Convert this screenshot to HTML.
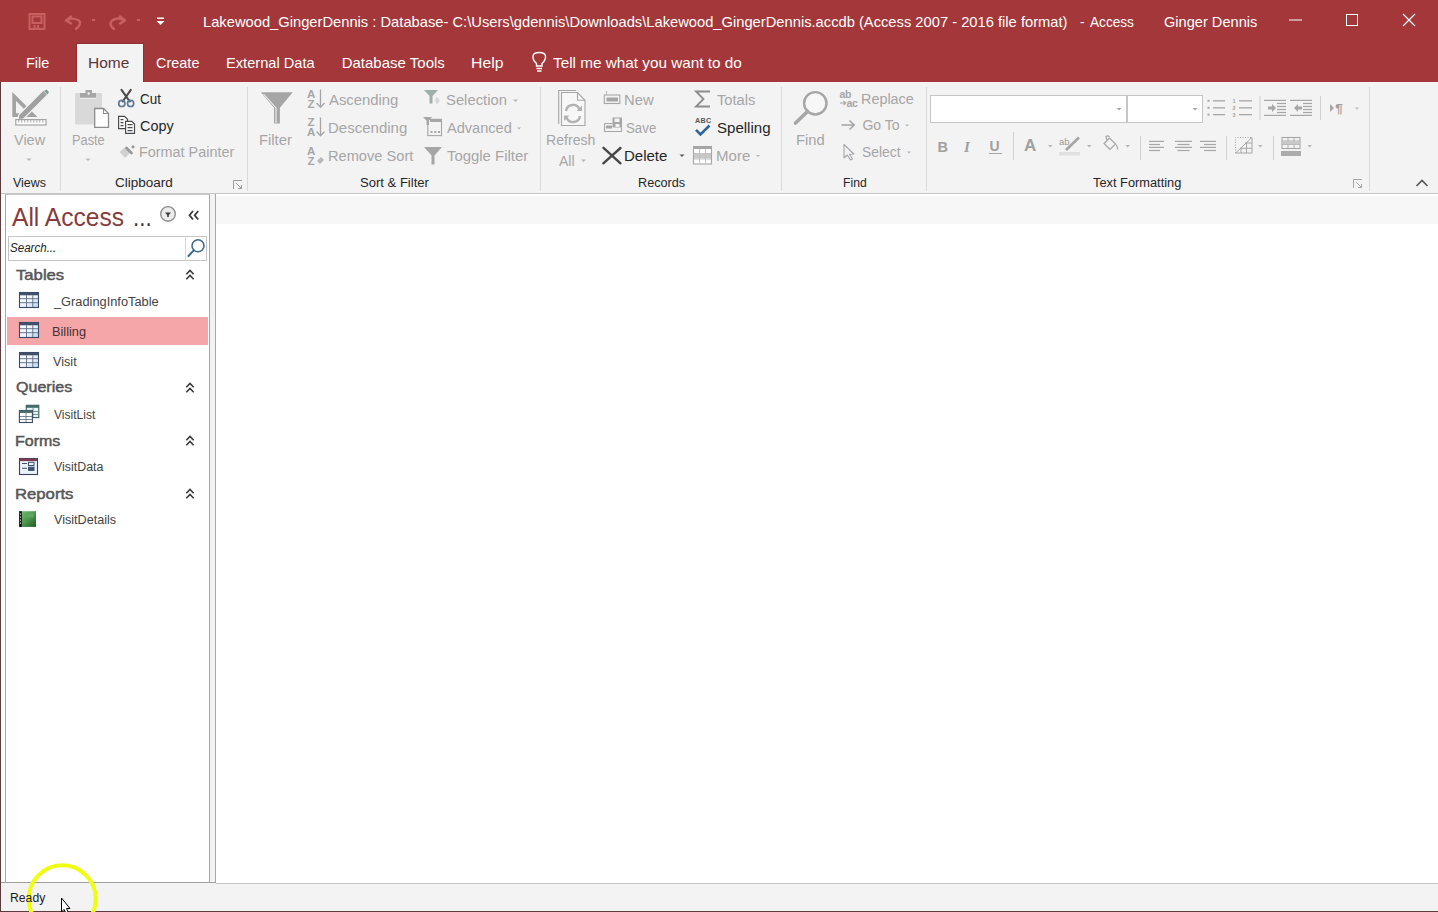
<!DOCTYPE html>
<html><head><meta charset="utf-8">
<style>
html,body{margin:0;padding:0}
body{width:1438px;height:912px;overflow:hidden;position:relative;background:#fff;font-family:"Liberation Sans",sans-serif}
.a{position:absolute}
.t{position:absolute;white-space:nowrap;transform-origin:0 0;font-family:"Liberation Sans",sans-serif}
svg{position:absolute;overflow:visible}
</style></head><body>
<!-- title bar + tabs -->
<div class="a" style="left:0;top:0;width:1438px;height:82px;background:#A4373A"></div>
<div class="a" style="left:76px;top:43px;width:68px;height:39px;background:#8E2F32"></div>
<div class="a" style="left:77px;top:44px;width:66px;height:38px;background:#F3F3F3"></div>
<!-- ribbon -->
<div class="a" style="left:0;top:82px;width:1438px;height:111px;background:#F3F3F3"></div>
<div class="a" style="left:0;top:193px;width:1438px;height:1px;background:#C6C6C6"></div>
<!-- group separators -->
<div class="a" style="left:60px;top:87px;width:1px;height:104px;background:#DADADA"></div>
<div class="a" style="left:247px;top:87px;width:1px;height:104px;background:#DADADA"></div>
<div class="a" style="left:540px;top:87px;width:1px;height:104px;background:#DADADA"></div>
<div class="a" style="left:781px;top:87px;width:1px;height:104px;background:#DADADA"></div>
<div class="a" style="left:926px;top:87px;width:1px;height:104px;background:#DADADA"></div>
<div class="a" style="left:1369px;top:87px;width:1px;height:104px;background:#DADADA"></div>
<!-- below ribbon -->
<div class="a" style="left:0;top:194px;width:1438px;height:689px;background:#FFFFFF"></div>
<div class="a" style="left:216px;top:196px;width:1222px;height:28px;background:#F7F7F7"></div>
<!-- nav pane -->
<div class="a" style="left:5px;top:194px;width:205px;height:689px;box-sizing:border-box;border:1px solid #A8A8A8;border-top-color:#C6C6C6;background:#fff"></div>
<div class="a" style="left:210px;top:194px;width:5px;height:689px;background:#F3F3F3"></div>
<div class="a" style="left:215px;top:194px;width:1px;height:689px;background:#A8A8A8"></div>
<div class="a" style="left:216px;top:883px;width:1222px;height:1px;background:#C0C0C0"></div>
<!-- status bar -->
<div class="a" style="left:0;top:883px;width:1438px;height:28px;background:#F3F3F3"></div>
<div class="a" style="left:0;top:882px;width:216px;height:1px;background:#A0A0A0"></div>
<div class="a" style="left:216px;top:883px;width:1222px;height:1px;background:#C4C4C4"></div>
<div class="a" style="left:0;top:911px;width:1438px;height:1px;background:#5B3A40"></div>
<div class="a" style="left:0;top:82px;width:1px;height:830px;background:#5B3A40"></div>
<!-- highlight -->
<div class="a" style="left:7px;top:317px;width:201px;height:28px;background:#F4A6A9"></div>
<!-- search box -->
<div class="a" style="left:8px;top:236px;width:199px;height:25px;box-sizing:border-box;border:1px solid #C6C6C6;background:#fff"></div>
<div class="a" style="left:185px;top:236px;width:1px;height:25px;background:#D8D8D8"></div>
<!-- font combos -->
<div class="a" style="left:930px;top:95px;width:197px;height:28px;box-sizing:border-box;border:1px solid #C6C6C6;background:#fff"></div>
<div class="a" style="left:1127px;top:95px;width:76px;height:28px;box-sizing:border-box;border:1px solid #C6C6C6;background:#fff"></div>
<svg class="a" style="left:0;top:0" width="1438" height="912" viewBox="0 0 1438 912">
<!-- QAT save -->
<g fill="none" stroke="#C8605F" stroke-width="2">
  <rect x="29.5" y="14" width="15" height="15"/>
  <rect x="32.5" y="16.5" width="9" height="6.5"/>
  <rect x="33.5" y="25" width="2" height="3" fill="#C8605F" stroke="none"/>
  <rect x="37" y="25" width="2" height="3" fill="#C8605F" stroke="none"/>
</g>
<!-- undo -->
<g fill="none" stroke="#C86062" stroke-width="2.4" stroke-linecap="round">
  <path d="M66 20.5 Q72 17 78 20 Q83 23 76 29"/>
  <path d="M66 20.5 L71 16.5 M66 20.5 L71 23.5"/>
  <path d="M114 19.5 Q119 17 125 20.5 M125 20.5 L120 16.5 M125 20.5 L120 23.5"/>
  <path d="M114 19.5 Q107 23 114 29"/>
</g>
<rect x="92" y="19" width="3" height="2" fill="#C86062"/>
<rect x="137" y="19" width="3" height="2" fill="#C86062"/>
<!-- customize -->
<rect x="157" y="17.5" width="7" height="1.5" fill="#fff"/>
<path d="M156.5 21 L164.5 21 L160.5 25 Z" fill="#fff"/>
<!-- window controls -->
<rect x="1289" y="19.5" width="13" height="1" fill="#fff"/>
<rect x="1346.5" y="14.5" width="11" height="11" fill="none" stroke="#fff" stroke-width="1"/>
<path d="M1403 14 L1415 26 M1415 14 L1403 26" stroke="#fff" stroke-width="1.1"/>
<!-- lightbulb -->
<g fill="none" stroke="#fff" stroke-width="1.4">
  <path d="M536.5 66 L536.5 63.5 Q532.5 60 533 56 Q533.5 52.5 539.3 52.5 Q545 52.5 545.5 56 Q546 60 542 63.5 L542 66 Z"/>
  <path d="M536.5 68.5 L542 68.5 M537 71 L541.5 71"/>
</g>

<!-- VIEW icon -->
<g>
  <path d="M12.3 92 L12.3 117 L37.5 117 Z M16 101 L16 113.3 L28.3 113.3 Z" fill="#A3A3A3" fill-rule="evenodd"/>
  <path d="M47.8 94.8 L43.2 90.2 L18.8 114.8 L18 119.5 L23.2 119.2 Z" fill="#A0A0A0" stroke="#F3F3F3" stroke-width="1.2"/>
  <path d="M44 91 L46.5 89.5 L49 92 L47.5 94.5 Z" fill="#7C9C94"/>
  <rect x="15.8" y="119.6" width="30.2" height="5.4" fill="#fff" stroke="#A3A3A3" stroke-width="1.2"/>
  <path d="M18.8 120 V122.6 M21.8 120 V122.6 M24.8 120 V122.6 M27.8 120 V122.6 M30.8 120 V122.6 M33.8 120 V122.6 M36.8 120 V122.6 M39.8 120 V122.6 M42.8 120 V122.6" stroke="#A3A3A3" stroke-width="1"/>
</g>
<path d="M26.5 158.5 L31.5 158.5 L29 161 Z" fill="#B5B5B5"/>
<!-- PASTE -->
<g>
  <rect x="75" y="93" width="27" height="31.5" rx="1" fill="#D9D9D9"/>
  <rect x="80" y="93" width="16" height="4.7" fill="#A6A6A6"/>
  <rect x="85.5" y="90" width="6.5" height="4" fill="#A6A6A6"/>
  <circle cx="88.7" cy="93.5" r="1.2" fill="#F3F3F3"/>
  <rect x="80" y="98" width="16" height="1" fill="#EDEDED"/>
  <path d="M94.7 108.5 H103.5 L108.5 113.5 V127.3 H94.7 Z" fill="#fff" stroke="#8C8C8C" stroke-width="1.3"/>
  <path d="M103.5 108.5 V113.5 H108.5" fill="none" stroke="#8C8C8C" stroke-width="1.1"/>
</g>
<path d="M85.5 158.5 L90.5 158.5 L88 161 Z" fill="#B5B5B5"/>
<!-- CUT -->
<g fill="none" stroke-width="1.7">
  <path d="M121.5 89.8 L129.8 101.5 M130.8 89.8 L122.7 101.5" stroke="#4A4A4A" stroke-width="2.1" stroke-linecap="round"/>
  <circle cx="121.8" cy="103.4" r="3.1" stroke="#5E7C98"/>
  <circle cx="130.6" cy="103.4" r="3.1" stroke="#5E7C98"/>
</g>
<!-- COPY -->
<g stroke="#4A4A4A" stroke-width="1.2">
  <path d="M118.6 116.3 H124.5 L127.5 119.3 V128.6 H118.6 Z" fill="#fff"/>
  <path d="M120.5 119.6 H123.5 M120.5 122.6 H123.5 M120.5 125.6 H123.5" />
  <path d="M125.6 121.4 H131.8 L134.5 124.1 V133.4 H125.6 Z" fill="#fff"/>
  <path d="M127.5 124.7 H132.5 M127.5 127.7 H132.5 M127.5 130.7 H132.5"/>
</g>
<!-- FORMAT PAINTER -->
<g>
  <path d="M119.5 152 L124.5 147.5 L130 153 L125 158 Z" fill="#D0D0D0"/>
  <path d="M126.5 148 L131.5 153" stroke="#9A9A9A" stroke-width="2.8" stroke-linecap="round"/>
  <circle cx="133" cy="146.8" r="1.6" fill="#999"/>
</g>
<!-- dialog launcher clipboard -->
<g fill="none" stroke="#9A9A9A" stroke-width="1">
  <path d="M233.5 189 V180.5 H242"/>
  <path d="M236 183 L241.5 188.5 M241.5 185 V188.5 H238"/>
</g>
<!-- FILTER big -->
<g>
  <path d="M260.8 92.2 H292.8 L279.9 107.7 V123.5 H274 V107.7 Z" fill="#A6A6A6"/>
  <path d="M263.5 94 L276 108 V123" fill="none" stroke="#F0F0F0" stroke-width="1.1"/>
</g>
<!-- ASC / DESC / REMOVE -->
<g fill="#A6A6A6" font-family="Liberation Sans" font-weight="700" font-size="11.5">
  <text x="307" y="97.5">A</text><text x="307.5" y="107.5">Z</text>
  <text x="307.5" y="126">Z</text><text x="307" y="136">A</text>
  <text x="307" y="154.5">A</text><text x="307.5" y="164.5">Z</text>
</g>
<g fill="none" stroke="#A6A6A6" stroke-width="1.3">
  <path d="M320.5 89.5 V107 M316.5 103 L320.5 107.2 L324.5 103"/>
  <path d="M320.5 117.5 V135.5 M316.5 131.5 L320.5 135.7 L324.5 131.5"/>
</g>
<path d="M317 161 L321 157 L324 160 L320 164 Z" fill="#B8B8B8"/>
<!-- SELECTION -->
<g fill="#A6A6A6">
  <path d="M424 90 H438 L432.5 96 V103.5 H429.5 V96 Z" fill="#9FAFAA"/>
  <path d="M436 97 Q440 98 439.5 101.5 L437 104.5 L435 101 Z" fill="#D8D8D8"/>
</g>
<path d="M513 99.5 L518 99.5 L515.5 102 Z" fill="#B5B5B5"/>
<!-- ADVANCED -->
<g>
  <path d="M423 117 H432 L429 120.5 V125 H426.5 V120.5 Z" fill="#A6A6A6"/>
  <rect x="427.8" y="119.3" width="13.7" height="16.3" fill="none" stroke="#A6A6A6" stroke-width="1.1"/>
  <rect x="430" y="119" width="11.5" height="3" fill="#A6A6A6"/>
  <rect x="430.5" y="131" width="2" height="2" fill="#A6A6A6"/>
  <rect x="434.3" y="131" width="2" height="2" fill="#A6A6A6"/>
  <rect x="438" y="131" width="2" height="2" fill="#A6A6A6"/>
</g>
<path d="M517 127.5 L521 127.5 L519 129.5 Z" fill="#B5B5B5"/>
<!-- TOGGLE FILTER -->
<path d="M424 147 H442 L434.5 155.5 V164.5 H431.5 V155.5 Z" fill="#A6A6A6"/>
<!-- REFRESH -->
<g fill="none" stroke="#A6A6A6" stroke-width="1.1">
  <path d="M558.7 124 V90.5 H576"/>
  <path d="M561.5 92.5 H577.5 L585 100.3 V125.5 H561.5 Z" fill="#F7F7F7"/>
  <path d="M577.5 92.5 V100.3 H585"/>
</g>
<g fill="none" stroke="#B3B3B3" stroke-width="2.4">
  <path d="M566 111 A7 7 0 0 1 579.5 109.5"/>
  <path d="M580 116 A7 7 0 0 1 566.5 117.5"/>
</g>
<path d="M576.5 111 L582 111 L582 105.5 Z" fill="#B3B3B3"/>
<path d="M569.5 115.5 L564 115.5 L564 121 Z" fill="#B3B3B3"/>
<path d="M581 159.5 L586 159.5 L583.5 162 Z" fill="#B5B5B5"/>
<!-- NEW -->
<g>
  <rect x="604.3" y="95" width="15.5" height="8.5" fill="none" stroke="#A6A6A6" stroke-width="1.1"/>
  <rect x="606.5" y="97.5" width="11.5" height="4" fill="#A6A6A6"/>
  <path d="M606.5 91 V95" stroke="#B8B8B8" stroke-width="1"/>
</g>
<!-- SAVE record -->
<g>
  <rect x="612.5" y="117.5" width="9.5" height="10" fill="#A6A6A6"/>
  <rect x="614.5" y="118.5" width="5" height="3.5" fill="#F3F3F3"/>
  <rect x="615.5" y="124" width="4" height="3" fill="#F3F3F3"/>
  <path d="M604.5 123.5 H612.5 M604.5 123.5 V131.5 H621.5 V127.5" fill="none" stroke="#A6A6A6" stroke-width="1.1"/>
  <rect x="606" y="125.5" width="6" height="3" fill="#A6A6A6"/>
</g>
<!-- DELETE X -->
<path d="M603.5 147.8 L620.5 163.3 M620.5 148 L603.3 163.3" stroke="#474747" stroke-width="2.4" stroke-linecap="round"/>
<path d="M679.5 154.5 L684.5 154.5 L682 157 Z" fill="#555"/>
<!-- TOTALS sigma -->
<path d="M710 91.5 H696 L703.5 99 L696 106.5 H710" fill="none" stroke="#8C8C8C" stroke-width="1.8"/>
<!-- SPELLING -->
<text x="695" y="122.8" font-family="Liberation Sans" font-size="7.2" font-weight="700" fill="#555" letter-spacing="0.3">ABC</text>
<path d="M696 129.8 L700.5 134.5 L709.5 125.5" fill="none" stroke="#2F6596" stroke-width="2.6"/>
<!-- MORE -->
<g>
  <rect x="693.5" y="146.5" width="18" height="17.5" fill="#fff" stroke="#A6A6A6" stroke-width="1.1"/>
  <rect x="693.5" y="146.5" width="18" height="2.5" fill="#A6A6A6"/>
  <rect x="694" y="154" width="17" height="4.5" fill="#C8C8C8"/>
  <path d="M699.5 149 V163.5 M705.5 149 V163.5 M694 153.5 H711 M694 159 H711" stroke="#BDBDBD" stroke-width="0.9"/>
</g>
<path d="M756 155 L760 155 L758 157 Z" fill="#B5B5B5"/>
<!-- FIND big -->
<g fill="none" stroke="#A6A6A6">
  <circle cx="815.3" cy="103.3" r="11.2" stroke-width="2.4" fill="#F7F7F7"/>
  <path d="M807.5 111.5 L795.5 123" stroke-width="3.6" stroke-linecap="round"/>
</g>
<!-- REPLACE -->
<g fill="#A6A6A6" font-family="Liberation Sans" font-size="10.5" font-weight="700">
  <text x="839.5" y="97.5" letter-spacing="-0.3">ab</text>
  <text x="846.5" y="107" letter-spacing="-0.3">ac</text>
</g>
<path d="M840 103 H845.5 M843.5 101 L845.7 103 L843.5 105" fill="none" stroke="#A6A6A6" stroke-width="1.1"/>
<!-- GO TO -->
<path d="M841.5 125 H854 M849.5 120.5 L854.2 125 L849.5 129.5" fill="none" stroke="#A6A6A6" stroke-width="1.6"/>
<path d="M905 124.5 L909 124.5 L907 126.5 Z" fill="#B5B5B5"/>
<!-- SELECT cursor -->
<path d="M844 144.5 V158 L847.3 155 L850.5 160 L852.5 159 L849.5 154.2 L853.8 154 Z" fill="none" stroke="#A6A6A6" stroke-width="1.1" stroke-linejoin="round"/>
<path d="M907 151.5 L911 151.5 L909 153.5 Z" fill="#B5B5B5"/>


<!-- font combos arrows -->
<path d="M1116.5 108 L1121.5 108 L1119 110.5 Z" fill="#A6A6A6"/>
<path d="M1192.5 108 L1197.5 108 L1195 110.5 Z" fill="#A6A6A6"/>
<!-- bullets -->
<g fill="#A6A6A6">
  <rect x="1207.5" y="99.8" width="2" height="2"/><rect x="1207.5" y="106.8" width="2" height="2"/><rect x="1207.5" y="113.6" width="2" height="2"/>
  <rect x="1213" y="100.2" width="12" height="1.3"/><rect x="1213" y="107.2" width="12" height="1.3"/><rect x="1213" y="114" width="12" height="1.3"/>
</g>
<g fill="#A6A6A6" font-family="Liberation Sans" font-size="5.5" font-weight="700">
  <text x="1232.5" y="103">1</text><text x="1232.5" y="110">2</text><text x="1232.5" y="117">3</text>
</g>
<g fill="#A6A6A6">
  <rect x="1239" y="100.2" width="13" height="1.3"/><rect x="1239" y="107.2" width="13" height="1.3"/><rect x="1239" y="114" width="13" height="1.3"/>
</g>
<rect x="1259.5" y="96" width="1" height="24" fill="#D0D0D0"/>
<!-- indent -->
<g fill="#A6A6A6">
  <rect x="1264" y="99.8" width="22" height="1.2"/><rect x="1277" y="102.9" width="9" height="1.2"/><rect x="1277" y="105.9" width="9" height="1.2"/><rect x="1277" y="108.9" width="9" height="1.2"/><rect x="1277" y="111.9" width="9" height="1.2"/><rect x="1264" y="114.8" width="22" height="1.2"/>
  <path d="M1268 106.5 H1272 V104 L1276 108 L1272 112 V109.5 H1268 Z"/>
  <rect x="1290" y="99.8" width="22" height="1.2"/><rect x="1303" y="102.9" width="9" height="1.2"/><rect x="1303" y="105.9" width="9" height="1.2"/><rect x="1303" y="108.9" width="9" height="1.2"/><rect x="1303" y="111.9" width="9" height="1.2"/><rect x="1290" y="114.8" width="22" height="1.2"/>
  <path d="M1302 106.5 H1298 V104 L1294 108 L1298 112 V109.5 H1302 Z"/>
</g>
<rect x="1320" y="96" width="1" height="24" fill="#D0D0D0"/>
<!-- paragraph direction -->
<path d="M1330 104 L1334 108 L1330 112 Z" fill="#A6A6A6"/>
<text x="1335.3" y="113" font-family="Liberation Sans" font-size="13.5" font-weight="700" fill="#A0A0A0">¶</text>
<path d="M1355 107.5 L1359 107.5 L1357 109.5 Z" fill="#B5B5B5"/>
<!-- B I U -->
<text x="937.5" y="151.5" font-family="Liberation Sans" font-size="14.5" font-weight="700" fill="#A0A0A0">B</text>
<text x="964" y="151.5" font-family="Liberation Serif" font-size="15" font-style="italic" font-weight="700" fill="#A0A0A0">I</text>
<text x="989.5" y="151" font-family="Liberation Sans" font-size="14" font-weight="700" fill="#A0A0A0">U</text>
<rect x="989" y="153" width="13" height="1" fill="#A6A6A6"/>
<rect x="1013" y="132" width="1" height="28" fill="#D0D0D0"/>
<!-- font color A -->
<text x="1024" y="150.5" font-family="Liberation Sans" font-size="17" font-weight="700" fill="#A0A0A0">A</text>
<path d="M1048 145 L1052.5 145 L1050.2 147.5 Z" fill="#B5B5B5"/>
<!-- highlighter -->
<text x="1059" y="144.5" font-family="Liberation Sans" font-size="9.5" fill="#999">ab</text>
<path d="M1066 150 L1079 137.5" stroke="#A6A6A6" stroke-width="2.8"/>
<rect x="1059" y="152" width="21" height="3.5" fill="#E0E0E0"/>
<path d="M1087 145 L1091.5 145 L1089.2 147.5 Z" fill="#B5B5B5"/>
<!-- fill bucket -->
<g fill="none" stroke="#A6A6A6" stroke-width="1.2">
  <path d="M1104 143.5 L1109.5 138 L1115.5 144 L1110 149.5 Z"/>
  <path d="M1107 140 L1106 136.5 Q1108 135 1109.5 137"/>
  <path d="M1116 144.5 Q1118 147 1117.5 149.5"/>
</g>
<path d="M1125.5 145 L1130 145 L1127.7 147.5 Z" fill="#B5B5B5"/>
<rect x="1140" y="136" width="1" height="24" fill="#D0D0D0"/>
<!-- aligns -->
<g fill="#A6A6A6">
  <rect x="1149" y="140.8" width="15" height="1.2"/><rect x="1149" y="143.9" width="11" height="1.2"/><rect x="1149" y="146.8" width="15" height="1.2"/><rect x="1149" y="149.9" width="11" height="1.2"/>
  <rect x="1175" y="140.8" width="17" height="1.2"/><rect x="1177.5" y="143.9" width="12" height="1.2"/><rect x="1175" y="146.8" width="17" height="1.2"/><rect x="1177.5" y="149.9" width="12" height="1.2"/>
  <rect x="1200" y="140.8" width="16" height="1.2"/><rect x="1204" y="143.9" width="12" height="1.2"/><rect x="1200" y="146.8" width="16" height="1.2"/><rect x="1204" y="149.9" width="12" height="1.2"/>
</g>
<rect x="1226" y="136" width="1" height="24" fill="#D0D0D0"/>
<!-- gridlines -->
<g fill="none" stroke="#A6A6A6" stroke-width="1">
  <path d="M1235.5 153 V137.5 H1252" stroke-dasharray="1 1.5"/>
  <path d="M1235.5 153 L1252 137.5 V153 Z"/>
  <path d="M1241 148 V153 M1246.5 143 V153 M1240 148.3 H1252 M1245 143 H1252"/>
</g>
<path d="M1258 145 L1262.5 145 L1260.2 147.5 Z" fill="#B5B5B5"/>
<rect x="1273" y="136" width="1" height="24" fill="#D0D0D0"/>
<!-- alt fill -->
<g>
  <rect x="1282" y="137.5" width="18" height="11" fill="#F3F3F3" stroke="#A6A6A6" stroke-width="1.1"/>
  <path d="M1288 137.5 V148.5 M1294 137.5 V148.5 M1282 141 H1300 M1282 144.5 H1300" stroke="#A6A6A6" stroke-width="0.9"/>
  <rect x="1282.5" y="141.5" width="17" height="3" fill="#C8C8C8"/>
  <rect x="1281" y="151" width="20" height="5" fill="#ABABAB"/>
</g>
<path d="M1307.5 145 L1312 145 L1309.7 147.5 Z" fill="#B5B5B5"/>
<!-- dialog launcher text formatting -->
<g fill="none" stroke="#A6A6A6" stroke-width="1">
  <path d="M1353.5 188 V179.5 H1362"/>
  <path d="M1356 182 L1361.5 187.5 M1361.5 184 V187.5 H1358"/>
</g>
<!-- collapse ribbon -->
<path d="M1416.5 186 L1422 180.5 L1427.5 186" fill="none" stroke="#555" stroke-width="1.6"/>
<!-- NAV: dropdown circle -->
<circle cx="168" cy="213.9" r="7.3" fill="#ECECEC" stroke="#8F8F8F" stroke-width="1.4"/>
<path d="M165 212.5 H171 L168.8 215 V217 H167.2 V215 Z" fill="#3A3A3A"/>
<!-- << -->
<path d="M193 211 L189.5 215.3 L193 219.5 M198.2 211 L194.7 215.3 L198.2 219.5" fill="none" stroke="#3A3A3A" stroke-width="1.8"/>
<!-- search magnifier -->
<circle cx="198" cy="245.8" r="6" fill="none" stroke="#3E6A8A" stroke-width="1.6"/>
<path d="M193.7 250.3 L188.5 256" stroke="#3E6A8A" stroke-width="2" stroke-linecap="round"/>
<!-- ^^ group chevrons -->
<g fill="none" stroke="#3A3A3A" stroke-width="1.6">
  <path d="M186.3 274.3 L190 270.5 L193.7 274.3 M186.3 279.3 L190 275.5 L193.7 279.3"/>
  <path d="M186.3 387.3 L190 383.5 L193.7 387.3 M186.3 392.3 L190 388.5 L193.7 392.3"/>
  <path d="M186.3 440.3 L190 436.5 L193.7 440.3 M186.3 445.3 L190 441.5 L193.7 445.3"/>
  <path d="M186.3 493.3 L190 489.5 L193.7 493.3 M186.3 498.3 L190 494.5 L193.7 498.3"/>
</g>

<defs><linearGradient id="tg" x1="0" y1="0" x2="1" y2="1"><stop offset="0" stop-color="#FFFFFF"/><stop offset="0.55" stop-color="#EEF4FB"/><stop offset="1" stop-color="#BCD3EC"/></linearGradient></defs><g>
  <rect x="19.5" y="292.5" width="19" height="15" fill="url(#tg)" stroke="#3A4A66" stroke-width="1.1"/>
  <rect x="19.5" y="292.5" width="19" height="2.8" fill="#3F4F6C"/>
  <path d="M20 298.7 H38 M20 302.7 H38" stroke="#5B6A82" stroke-width="0.9"/>
  <path d="M26.5 295.3 V307 M32.8 295.3 V307" stroke="#5B6A82" stroke-width="0.9"/>
</g><g>
  <rect x="19.5" y="322.5" width="19" height="15" fill="url(#tg)" stroke="#3A4A66" stroke-width="1.1"/>
  <rect x="19.5" y="322.5" width="19" height="2.8" fill="#3F4F6C"/>
  <path d="M20 328.7 H38 M20 332.7 H38" stroke="#5B6A82" stroke-width="0.9"/>
  <path d="M26.5 325.3 V337 M32.8 325.3 V337" stroke="#5B6A82" stroke-width="0.9"/>
</g><g>
  <rect x="19.5" y="352.5" width="19" height="15" fill="url(#tg)" stroke="#3A4A66" stroke-width="1.1"/>
  <rect x="19.5" y="352.5" width="19" height="2.8" fill="#3F4F6C"/>
  <path d="M20 358.7 H38 M20 362.7 H38" stroke="#5B6A82" stroke-width="0.9"/>
  <path d="M26.5 355.3 V367 M32.8 355.3 V367" stroke="#5B6A82" stroke-width="0.9"/>
</g>
<!-- query icon -->
<g>
  <rect x="26.3" y="405.3" width="12.5" height="12.3" fill="#E6F4F4" stroke="#355A5A" stroke-width="1.1"/>
  <rect x="26.3" y="405.3" width="12.5" height="2.5" fill="#3F6B6B"/>
  <path d="M33 408 V417 M27 411.5 H38 M27 414.5 H38" stroke="#5A7A7A" stroke-width="0.8"/>
  <rect x="19.4" y="410.5" width="13" height="12" fill="#FFFFFF" stroke="#3A4A5E" stroke-width="1.1"/>
  <rect x="19.4" y="410.5" width="13" height="2.5" fill="#4C6E6E"/>
  <path d="M26 413 V422 M20 416.5 H32 M20 419.5 H32" stroke="#5A6A7E" stroke-width="0.8"/>
</g>
<!-- form icon -->
<g>
  <rect x="19.5" y="458.5" width="18" height="16" fill="#EAF2FB" stroke="#3E3E55" stroke-width="1.1"/>
  <rect x="19.5" y="458.5" width="18" height="2.6" fill="#7A3D50"/>
  <path d="M22 463.5 H27 M22 468.3 H27" stroke="#4A5068" stroke-width="1"/>
  <rect x="28.5" y="462.3" width="5.5" height="3.2" fill="none" stroke="#3F4F6F" stroke-width="1"/>
  <rect x="28.5" y="467.2" width="5.5" height="3.2" fill="#3F4F6F" stroke="#3F4F6F" stroke-width="1"/>
</g>
<!-- report icon -->
<defs><linearGradient id="rg" x1="0" y1="0" x2="1" y2="1"><stop offset="0" stop-color="#78C078"/><stop offset="0.5" stop-color="#4E9A50"/><stop offset="1" stop-color="#1F5A22"/></linearGradient></defs>
<g>
  <rect x="19.2" y="511.2" width="16.8" height="15.7" fill="url(#rg)"/>
  <rect x="24.5" y="513.5" width="9" height="4" fill="#5FA65F"/>
  <rect x="19.2" y="511.2" width="2.6" height="15.7" fill="#0A0A0A"/>
  <path d="M20.5 513.5 V514.7 M20.5 516.5 V517.7 M20.5 519.5 V520.7 M20.5 522.5 V523.7" stroke="#E8E8E8" stroke-width="1"/>
</g>
<!-- yellow cursor highlight -->
<circle cx="62.2" cy="898.8" r="33.5" fill="none" stroke="#EEFF10" stroke-width="4"/>
<path d="M61.5 898 V912 L64 909.5 L66.5 914 L68.5 913 L66.5 908.5 L70 908.5 Z" fill="#fff" stroke="#000" stroke-width="1"/>

</svg>

<span class="t" style="left:202.52px;top:14.00px;font-size:15px;line-height:15px;color:#FFFFFF;transform:scaleX(0.9809)">Lakewood_GingerDennis : Database- C:\Users\gdennis\Downloads\Lakewood_GingerDennis.accdb (Access 2007 - 2016 file format)</span>
<span class="t" style="left:1079.50px;top:14.00px;font-size:15px;line-height:15px;color:#FFFFFF;transform:scaleX(0.9000)">-</span>
<span class="t" style="left:1090.20px;top:14.00px;font-size:15px;line-height:15px;color:#FFFFFF;transform:scaleX(0.9071)">Access</span>
<span class="t" style="left:1163.90px;top:13.50px;font-size:15px;line-height:15px;color:#FFFFFF;transform:scaleX(0.9729)">Ginger Dennis</span>
<span class="t" style="left:25.54px;top:55.00px;font-size:15px;line-height:15px;color:#FFFFFF;transform:scaleX(0.9637)">File</span>
<span class="t" style="left:88.47px;top:55.00px;font-size:15px;line-height:15px;color:#5A3537;transform:scaleX(1.0344)">Home</span>
<span class="t" style="left:156.40px;top:55.00px;font-size:15px;line-height:15px;color:#FFFFFF;transform:scaleX(0.9646)">Create</span>
<span class="t" style="left:226.12px;top:55.00px;font-size:15px;line-height:15px;color:#FFFFFF;transform:scaleX(0.9764)">External Data</span>
<span class="t" style="left:341.70px;top:55.00px;font-size:15px;line-height:15px;color:#FFFFFF">Database Tools</span>
<span class="t" style="left:470.95px;top:55.00px;font-size:15px;line-height:15px;color:#FFFFFF;transform:scaleX(1.0506)">Help</span>
<span class="t" style="left:553.00px;top:55.00px;font-size:15px;line-height:15px;color:#FFFFFF;transform:scaleX(1.0203)">Tell me what you want to do</span>
<span class="t" style="left:14.00px;top:133.00px;font-size:14px;line-height:14px;color:#A6A6A6;transform:scaleX(1.0329)">View</span>
<span class="t" style="left:72.09px;top:133.00px;font-size:14px;line-height:14px;color:#A6A6A6;transform:scaleX(0.9139)">Paste</span>
<span class="t" style="left:259.44px;top:133.00px;font-size:14px;line-height:14px;color:#A6A6A6;transform:scaleX(1.0575)">Filter</span>
<span class="t" style="left:546.39px;top:133.00px;font-size:14px;line-height:14px;color:#A6A6A6;transform:scaleX(1.0077)">Refresh</span>
<span class="t" style="left:558.60px;top:153.60px;font-size:14px;line-height:14px;color:#A6A6A6;transform:scaleX(0.9969)">All</span>
<span class="t" style="left:796.25px;top:133.00px;font-size:14px;line-height:14px;color:#A6A6A6;transform:scaleX(1.0492)">Find</span>
<span class="t" style="left:140.40px;top:91.70px;font-size:14px;line-height:14px;color:#262626;transform:scaleX(0.9591)">Cut</span>
<span class="t" style="left:140.40px;top:118.60px;font-size:14px;line-height:14px;color:#262626;transform:scaleX(1.0281)">Copy</span>
<span class="t" style="left:139.47px;top:145.30px;font-size:14px;line-height:14px;color:#A6A6A6;transform:scaleX(1.0280)">Format Painter</span>
<span class="t" style="left:328.60px;top:93.00px;font-size:14px;line-height:14px;color:#A6A6A6;transform:scaleX(1.0589)">Ascending</span>
<span class="t" style="left:327.53px;top:120.80px;font-size:14px;line-height:14px;color:#A6A6A6;transform:scaleX(1.0727)">Descending</span>
<span class="t" style="left:327.56px;top:148.70px;font-size:14px;line-height:14px;color:#A6A6A6;transform:scaleX(1.0445)">Remove Sort</span>
<span class="t" style="left:446.40px;top:93.00px;font-size:14px;line-height:14px;color:#A6A6A6;transform:scaleX(1.0580)">Selection</span>
<span class="t" style="left:447.00px;top:120.80px;font-size:14px;line-height:14px;color:#A6A6A6;transform:scaleX(1.0409)">Advanced</span>
<span class="t" style="left:447.00px;top:148.70px;font-size:14px;line-height:14px;color:#A6A6A6;transform:scaleX(1.0641)">Toggle Filter</span>
<span class="t" style="left:624.44px;top:93.00px;font-size:14px;line-height:14px;color:#A6A6A6;transform:scaleX(1.0575)">New</span>
<span class="t" style="left:625.50px;top:120.80px;font-size:14px;line-height:14px;color:#A6A6A6;transform:scaleX(0.9494)">Save</span>
<span class="t" style="left:624.43px;top:148.70px;font-size:14px;line-height:14px;color:#262626;transform:scaleX(1.0710)">Delete</span>
<span class="t" style="left:716.60px;top:93.00px;font-size:14px;line-height:14px;color:#A6A6A6;transform:scaleX(1.0500)">Totals</span>
<span class="t" style="left:716.60px;top:120.80px;font-size:14px;line-height:14px;color:#262626;transform:scaleX(1.0749)">Spelling</span>
<span class="t" style="left:715.53px;top:148.70px;font-size:14px;line-height:14px;color:#A6A6A6;transform:scaleX(1.0736)">More</span>
<span class="t" style="left:861.37px;top:91.70px;font-size:14px;line-height:14px;color:#A6A6A6;transform:scaleX(1.0281)">Replace</span>
<span class="t" style="left:862.40px;top:118.30px;font-size:14px;line-height:14px;color:#A6A6A6">Go To</span>
<span class="t" style="left:862.40px;top:145.00px;font-size:14px;line-height:14px;color:#A6A6A6;transform:scaleX(0.9892)">Select</span>
<span class="t" style="left:13.00px;top:177.30px;font-size:12px;line-height:12px;color:#262626;transform:scaleX(1.0380)">Views</span>
<span class="t" style="left:114.60px;top:177.30px;font-size:12px;line-height:12px;color:#262626;transform:scaleX(1.1245)">Clipboard</span>
<span class="t" style="left:359.60px;top:177.30px;font-size:12px;line-height:12px;color:#262626;transform:scaleX(1.0876)">Sort &amp; Filter</span>
<span class="t" style="left:637.90px;top:177.30px;font-size:12px;line-height:12px;color:#262626;transform:scaleX(1.0541)">Records</span>
<span class="t" style="left:842.60px;top:177.30px;font-size:12px;line-height:12px;color:#262626;transform:scaleX(1.0146)">Find</span>
<span class="t" style="left:1093.20px;top:177.30px;font-size:12px;line-height:12px;color:#262626;transform:scaleX(1.0680)">Text Formatting</span>
<span class="t" style="left:11.80px;top:203.80px;font-size:26px;line-height:26px;color:#873B3D;transform:scaleX(0.9456)">All Access</span>
<span class="t" style="left:132.68px;top:203.80px;font-size:26px;line-height:26px;color:#3F3A3A;transform:scaleX(0.8597)">...</span>
<span class="t" style="left:10.00px;top:241.60px;font-size:12px;line-height:12px;color:#222222;font-style:italic;transform:scaleX(0.9638)">Search...</span>
<span class="t" style="left:16.10px;top:267.50px;font-size:14.5px;line-height:14.5px;color:#595959;-webkit-text-stroke:0.45px #505050;transform:scaleX(1.1497)">Tables</span>
<span class="t" style="left:15.90px;top:380.40px;font-size:14.5px;line-height:14.5px;color:#595959;-webkit-text-stroke:0.45px #505050;transform:scaleX(1.1065)">Queries</span>
<span class="t" style="left:14.90px;top:433.60px;font-size:14.5px;line-height:14.5px;color:#595959;-webkit-text-stroke:0.45px #505050;transform:scaleX(1.1047)">Forms</span>
<span class="t" style="left:14.85px;top:487.00px;font-size:14.5px;line-height:14.5px;color:#595959;-webkit-text-stroke:0.45px #505050;transform:scaleX(1.1510)">Reports</span>
<span class="t" style="left:53.82px;top:295.80px;font-size:12.5px;line-height:12.5px;color:#444444;transform:scaleX(1.0242)">_GradingInfoTable</span>
<span class="t" style="left:52.28px;top:325.90px;font-size:12.5px;line-height:12.5px;color:#4A3030;transform:scaleX(1.0217)">Billing</span>
<span class="t" style="left:53.30px;top:355.50px;font-size:12.5px;line-height:12.5px;color:#444444;transform:scaleX(1.0119)">Visit</span>
<span class="t" style="left:53.80px;top:408.70px;font-size:12.5px;line-height:12.5px;color:#444444;transform:scaleX(0.9639)">VisitList</span>
<span class="t" style="left:53.80px;top:461.40px;font-size:12.5px;line-height:12.5px;color:#444444;transform:scaleX(0.9912)">VisitData</span>
<span class="t" style="left:53.80px;top:514.30px;font-size:12.5px;line-height:12.5px;color:#444444;transform:scaleX(1.0090)">VisitDetails</span>
<span class="t" style="left:9.50px;top:891.50px;font-size:12px;line-height:12px;color:#222222;transform:scaleX(1.0177)">Ready</span>
</body></html>
